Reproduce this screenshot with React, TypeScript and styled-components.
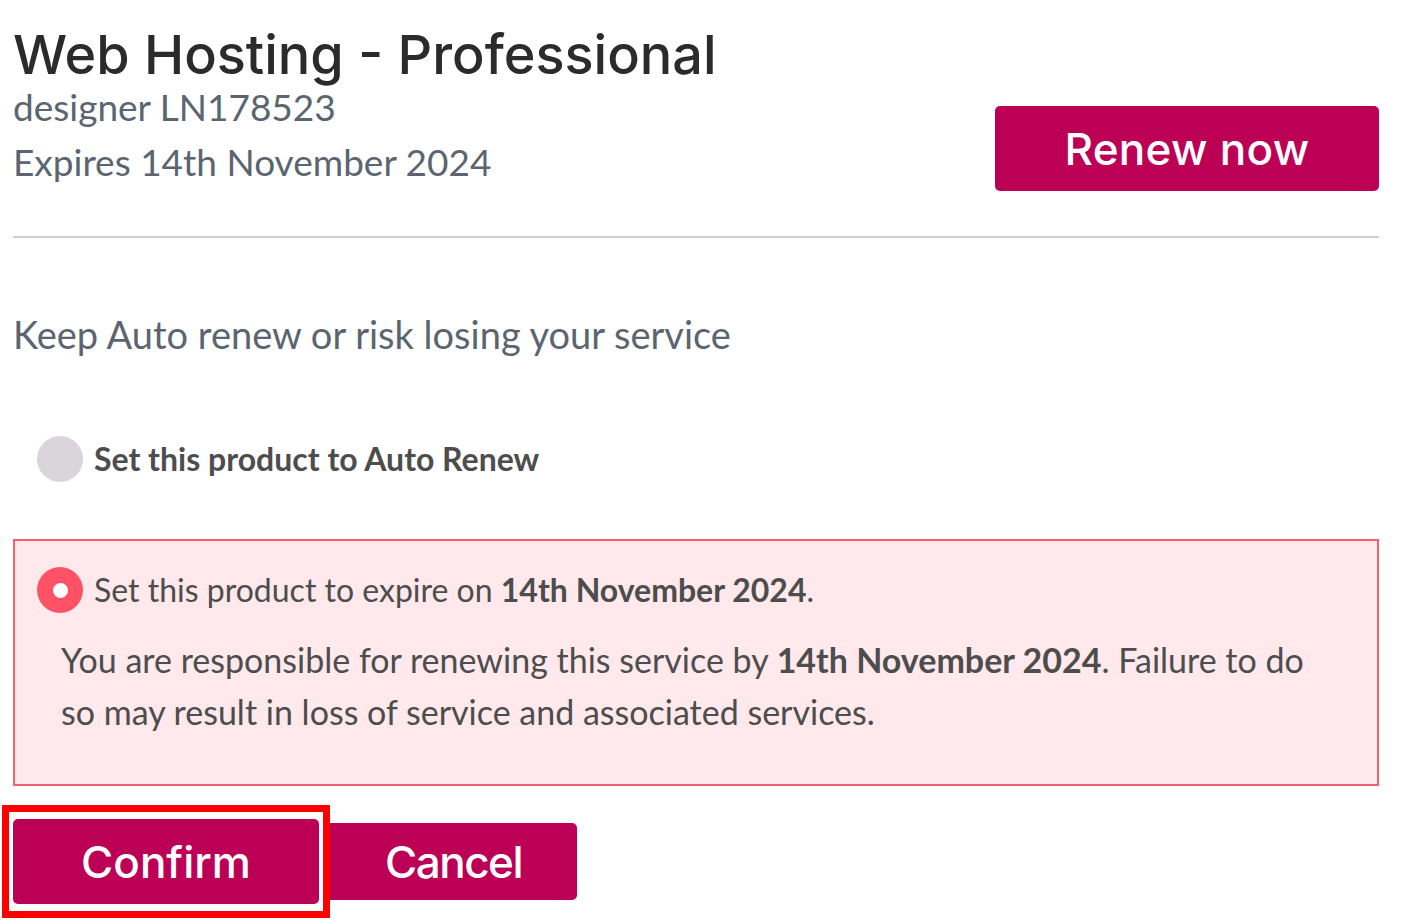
import React, { useState } from "react";
import styled, { createGlobalStyle } from "styled-components";

const Colors = {
  BRAND: "#bc0056",
  HEADING: "#2b2b2b",
  MUTED: "#5b6570",
  TEXT: "#4d4d4d",
  DIVIDER: "#cfcfcf",
  RADIO_OFF: "#d9d5db",
  RADIO_ON: "#ff5266",
  ALERT_BG: "#ffe9ec",
  ALERT_BORDER: "#f4606f",
  FOCUS: "#ff0000",
};

const GlobalStyle = createGlobalStyle`
  * { box-sizing: border-box; }
  body {
    margin: 0;
    background: #fff;
    font-family: Lato, "Open Sans", sans-serif;
    color: ${Colors.TEXT};
  }
`;

const Page = styled.div`
  width: 1366px;
  margin-left: 13px;
  padding-top: 31px;
`;

const Header = styled.div`
  display: flex;
  align-items: flex-start;
  justify-content: space-between;
  padding-bottom: 45px;
  border-bottom: 2px solid ${Colors.DIVIDER};
`;

const Product = styled.div`
  display: flex;
  flex-direction: column;
`;

const Title = styled.h1`
  margin: 0;
  font-family: Inter, sans-serif;
  font-weight: 500;
  font-size: 54px;
  line-height: 48px;
  letter-spacing: 0;
  color: ${Colors.HEADING};
`;

const Meta = styled.div`
  font-size: 37px;
  line-height: 55px;
  color: ${Colors.MUTED};
`;

const BrandButton = styled.button<{ joined?: boolean }>`
  border: none;
  padding: 0;
  background: ${Colors.BRAND};
  color: #fff;
  font-family: Inter, sans-serif;
  font-weight: 500;
  font-size: 44px;
  border-radius: ${({ joined }) => (joined ? "0 5px 5px 0" : "5px")};
  cursor: pointer;
`;

const RenewButton = styled(BrandButton)`
  margin-top: 75px;
  width: 384px;
  height: 85px;
  letter-spacing: 0.3px;
`;

const Lead = styled.p`
  margin: 72px 0 0;
  font-size: 38px;
  line-height: 48px;
  color: ${Colors.MUTED};
`;

const Option = styled.label<{ selected?: boolean }>`
  display: block;
  margin-top: ${({ selected }) => (selected ? "54px" : "75px")};
  padding: ${({ selected }) => (selected ? "25px 22px 46px 22px" : "0 0 0 22px")};
  background: ${({ selected }) => (selected ? Colors.ALERT_BG : "transparent")};
  border: 2px solid ${({ selected }) => (selected ? Colors.ALERT_BORDER : "transparent")};
  cursor: pointer;
`;

const OptionRow = styled.div`
  display: flex;
  align-items: center;
  gap: 11px;
`;

const Radio = styled.span<{ checked?: boolean }>`
  flex: none;
  width: 46px;
  height: 46px;
  border-radius: 50%;
  background: ${({ checked }) => (checked ? Colors.RADIO_ON : Colors.RADIO_OFF)};
  display: flex;
  align-items: center;
  justify-content: center;

  &::after {
    content: "";
    display: ${({ checked }) => (checked ? "block" : "none")};
    width: 15px;
    height: 15px;
    border-radius: 50%;
    background: #fff;
  }
`;

const OptionText = styled.span<{ strong?: boolean }>`
  font-size: 32px;
  line-height: 48px;
  font-weight: ${({ strong }) => (strong ? 700 : 400)};
  color: ${Colors.TEXT};

  b {
    font-weight: 700;
  }
`;

const Warning = styled.p`
  margin: 20px 0 0 24px;
  font-size: 34px;
  line-height: 52px;
  color: ${Colors.TEXT};

  b {
    font-weight: 700;
  }
`;

const Actions = styled.div`
  display: flex;
  align-items: center;
  margin-top: 19px;
`;

const FocusRing = styled.div`
  margin-left: -11px;
  padding: 7px 4px;
  border: 7px solid ${Colors.FOCUS};
`;

const ConfirmButton = styled(BrandButton)`
  display: block;
  width: 306px;
  height: 85px;
`;

const CancelButton = styled(BrandButton)`
  width: 247px;
  height: 77px;
  letter-spacing: -1.5px;
`;

function App() {
  const [choice, setChoice] = useState<"renew" | "expire">("expire");

  return (
    <Page>
      <GlobalStyle />
      <Header>
        <Product>
          <Title>Web Hosting - Professional</Title>
          <Meta>designer LN178523</Meta>
          <Meta>Expires 14th November 2024</Meta>
        </Product>
        <RenewButton>Renew now</RenewButton>
      </Header>

      <Lead>Keep Auto renew or risk losing your service</Lead>

      <Option onClick={() => setChoice("renew")} selected={choice === "renew"}>
        <OptionRow>
          <Radio checked={choice === "renew"} />
          <OptionText strong>Set this product to Auto Renew</OptionText>
        </OptionRow>
      </Option>

      <Option onClick={() => setChoice("expire")} selected={choice === "expire"}>
        <OptionRow>
          <Radio checked={choice === "expire"} />
          <OptionText>
            Set this product to expire on <b>14th November 2024</b>.
          </OptionText>
        </OptionRow>
        {choice === "expire" && (
          <Warning>
            You are responsible for renewing this service by{" "}
            <b>14th November 2024</b>. Failure to do
            <br />
            so may result in loss of service and associated services.
          </Warning>
        )}
      </Option>

      <Actions>
        <FocusRing>
          <ConfirmButton>Confirm</ConfirmButton>
        </FocusRing>
        <CancelButton joined>Cancel</CancelButton>
      </Actions>
    </Page>
  );
}

export default App;
